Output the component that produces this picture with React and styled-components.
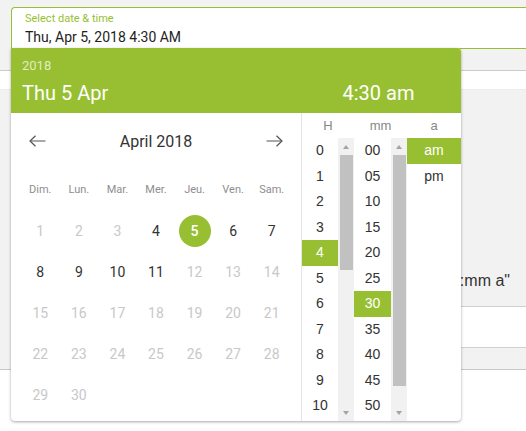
import styled, { createGlobalStyle } from "styled-components";

const green = "#97bf31";

const GlobalStyle = createGlobalStyle`
    html, body {
        margin: 0;
        padding: 0;
        background: #ffffff;
        font-family: Roboto, "Liberation Sans", sans-serif;
    }
    * { box-sizing: border-box; }
`;

const Page = styled.div`
    position: relative;
    width: 526px;
    height: 431px;
    overflow: hidden;
    background: #ffffff;
`;

const Top = styled.div`
    background: #f2f2f2;
    padding: 7px 0 0 11px;
`;

const Field = styled.div`
    height: 42px;
    background: #fff;
    border: 1px solid ${green};
    border-right: none;
    border-radius: 4px 0 0 0;
    padding: 4px 0 0 13px;
`;

const FieldLabel = styled.div`
    font-size: 11px;
    line-height: 14px;
    color: ${green};
`;

const FieldValue = styled.div`
    margin-top: 3px;
    font-size: 14px;
    line-height: 17px;
    color: #1e1e1e;
`;

const Bar = styled.div`
    height: 22px;
    background: #f2f2f2;
    border-bottom: 1px solid #cccccc;
`;

const Strip = styled.div`
    height: 19px;
    background: #fff;
    border-bottom: 1px solid #ececec;
`;

const Section = styled.div`
    background: #f2f2f2;
    padding: 181px 0 21px 20px;
    border-bottom: 1px solid #c8c8c8;
`;

const Hint = styled.div`
    font-family: "Liberation Sans", Arial, sans-serif;
    font-size: 16px;
    line-height: 20px;
    color: #333;
    text-align: right;
    padding-right: 16px;
    margin-bottom: 15px;
`;

const Box = styled.div`
    height: 42px;
    background: #fff;
    border-top: 1px solid #d0d0d0;
    border-bottom: 1px solid #d0d0d0;
`;

const Popup = styled.div`
    position: absolute;
    left: 11px;
    top: 48px;
    width: 450px;
    height: 373px;
    background: #fff;
    border-radius: 0 4px 4px 4px;
    box-shadow: 0 1px 3px rgba(0, 0, 0, 0.35);
    overflow: hidden;
    display: flex;
    flex-direction: column;
`;

const Header = styled.div`
    flex-shrink: 0;
    height: 65px;
    background: ${green};
    color: #fff;
    display: flex;
    align-items: flex-end;
    padding-bottom: 8px;
`;

const HeaderDate = styled.div`
    flex: 1;
    padding-left: 11px;
`;

const Year = styled.div`
    font-size: 13px;
    line-height: 15px;
    color: rgba(255, 255, 255, 0.72);
    margin-bottom: 8px;
`;

const Big = styled.div`
    font-size: 20px;
    line-height: 24px;
`;

const HeaderTime = styled(Big)`
    width: 159px;
    text-align: center;
    padding-right: 6px;
`;

const Body = styled.div`
    flex: 1;
    min-height: 0;
    display: flex;
`;

const Calendar = styled.div`
    width: 291px;
    border-right: 1px solid #e4e4e4;
    padding: 0 10px;
`;

const Nav = styled.div`
    height: 56px;
    display: flex;
    align-items: center;
    justify-content: space-between;
    padding: 0 8px 0 8px;
`;

const Title = styled.div`
    font-size: 16px;
    color: #333;
`;

const Grid = styled.div`
    display: grid;
    grid-template-columns: repeat(7, 1fr);
    grid-auto-rows: 41px;
`;

const WeekDay = styled.div`
    display: flex;
    align-items: center;
    justify-content: center;
    font-size: 11px;
    color: #8e8e8e;
`;

const Day = styled.div`
    display: flex;
    align-items: center;
    justify-content: center;
    font-size: 14px;
    color: ${(p) => (p.$off ? "#c8c8c8" : "#333")};
`;

const Selected = styled.span`
    width: 32px;
    height: 32px;
    border-radius: 50%;
    background: ${green};
    color: #fff;
    font-weight: 500;
    display: flex;
    align-items: center;
    justify-content: center;
`;

const Time = styled.div`
    flex: 1;
    min-height: 0;
    display: flex;
    flex-direction: column;
    font-family: "Liberation Sans", Arial, sans-serif;
`;

const TimeHead = styled.div`
    flex-shrink: 0;
    height: 25px;
    display: flex;
`;

const TimeLabel = styled.div`
    width: ${(p) => p.$w}px;
    text-align: center;
    font-size: 13px;
    line-height: 25px;
    color: #888;
`;

const Columns = styled.div`
    flex: 1;
    display: flex;
    min-height: 0;
`;

const List = styled.div`
    width: ${(p) => p.$w}px;
    overflow: hidden;
`;

const Item = styled.div`
    height: 25.5px;
    line-height: 25.5px;
    text-align: center;
    font-size: 14px;
    color: ${(p) => (p.$on ? "#fff" : "#333")};
    background: ${(p) => (p.$on ? green : "transparent")};
`;

const Scroll = styled.div`
    width: 16px;
    background: #f1f1f1;
    display: flex;
    flex-direction: column;
`;

const ScrollBtn = styled.div`
    height: 17px;
    flex-shrink: 0;
    display: flex;
    align-items: center;
    justify-content: center;
    &::after {
        content: "";
        border-left: 3.5px solid transparent;
        border-right: 3.5px solid transparent;
        ${(p) => (p.$down ? "border-top" : "border-bottom")}: 4px solid #a3a3a3;
    }
`;

const Track = styled.div`
    flex: 1;
    min-height: 0;
`;

const Thumb = styled.div`
    height: ${(p) => p.$h}px;
    margin: 0 1px 0 2px;
    background: #c1c1c1;
`;

function Arrow({ right }) {
    return (
        <svg width="17" height="12" viewBox="0 0 17 12" fill="none" stroke="#555" strokeWidth="1.2">
            {right ? (
                <>
                    <path d="M0.5 6H16" />
                    <path d="M10.5 0.8L16 6L10.5 11.2" />
                </>
            ) : (
                <>
                    <path d="M1 6H16.5" />
                    <path d="M6.5 0.8L1 6L6.5 11.2" />
                </>
            )}
        </svg>
    );
}

function ScrollBar({ thumb }) {
    return (
        <Scroll>
            <ScrollBtn />
            <Track>
                <Thumb $h={thumb} />
            </Track>
            <ScrollBtn $down />
        </Scroll>
    );
}

const weekDays = ["Dim.", "Lun.", "Mar.", "Mer.", "Jeu.", "Ven.", "Sam."];
const hours = Array.from({ length: 11 }, (_, i) => i);
const minutes = Array.from({ length: 11 }, (_, i) => String(i * 5).padStart(2, "0"));

function App() {
    const days = Array.from({ length: 30 }, (_, i) => i + 1);

    return (
        <Page>
            <GlobalStyle />
            <Top>
                <Field>
                    <FieldLabel>Select date &amp; time</FieldLabel>
                    <FieldValue>Thu, Apr 5, 2018 4:30 AM</FieldValue>
                </Field>
            </Top>
            <Bar />
            <Strip />
            <Section>
                <Hint>format "ddd, MMM D, YYYY h:mm a"</Hint>
                <Box />
            </Section>

            <Popup>
                <Header>
                    <HeaderDate>
                        <Year>2018</Year>
                        <Big>Thu 5 Apr</Big>
                    </HeaderDate>
                    <HeaderTime>4:30 am</HeaderTime>
                </Header>
                <Body>
                    <Calendar>
                        <Nav>
                            <Arrow />
                            <Title>April 2018</Title>
                            <Arrow right />
                        </Nav>
                        <Grid>
                            {weekDays.map((d) => (
                                <WeekDay key={d}>{d}</WeekDay>
                            ))}
                            {days.map((d) => (
                                <Day key={d} $off={d < 4 || d > 11}>
                                    {d === 5 ? <Selected>{d}</Selected> : d}
                                </Day>
                            ))}
                        </Grid>
                    </Calendar>
                    <Time>
                        <TimeHead>
                            <TimeLabel $w={52}>H</TimeLabel>
                            <TimeLabel $w={53}>mm</TimeLabel>
                            <TimeLabel $w={54}>a</TimeLabel>
                        </TimeHead>
                        <Columns>
                            <List $w={36}>
                                {hours.map((h) => (
                                    <Item key={h} $on={h === 4}>{h}</Item>
                                ))}
                            </List>
                            <ScrollBar thumb={115} />
                            <List $w={37}>
                                {minutes.map((m) => (
                                    <Item key={m} $on={m === "30"}>{m}</Item>
                                ))}
                            </List>
                            <ScrollBar thumb={231} />
                            <List $w={54}>
                                <Item $on>am</Item>
                                <Item>pm</Item>
                            </List>
                        </Columns>
                    </Time>
                </Body>
            </Popup>
        </Page>
    );
}

export default App;
